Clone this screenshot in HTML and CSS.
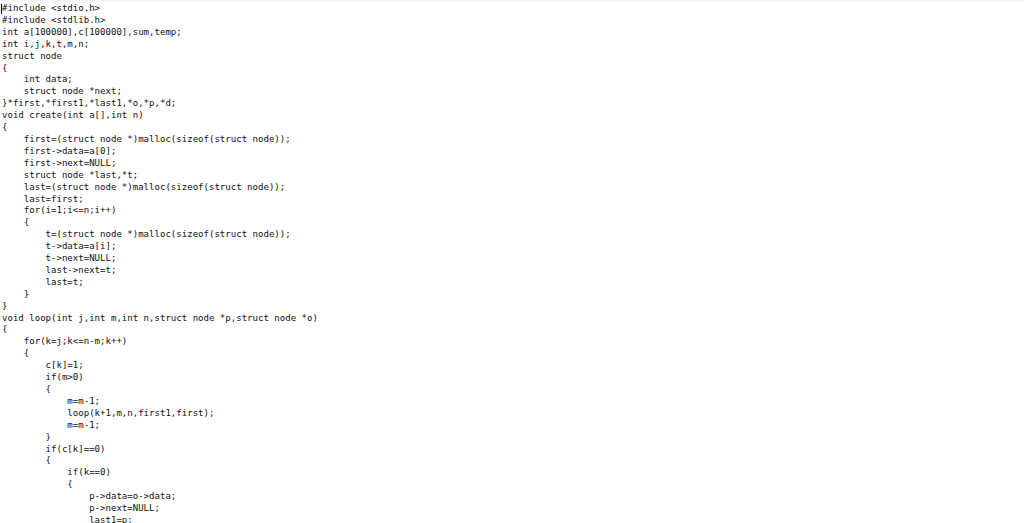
FILE: index.html
```html
<!DOCTYPE html>
<html lang="en">
<head>
    <meta charset="UTF-8">
    <title>main.c</title>
    <link rel="stylesheet" href="styles.css">
</head>
<body>
    <div class="top-strip"></div>
    <div class="editor">
<pre class="code"><span class="caret"></span>#include &lt;stdio.h&gt;
#include &lt;stdlib.h&gt;
int a[100000],c[100000],sum,temp;
int i,j,k,t,m,n;
struct node
{
    int data;
    struct node *next;
}*first,*first1,*last1,*o,*p,*d;
void create(int a[],int n)
{
    first=(struct node *)malloc(sizeof(struct node));
    first-&gt;data=a[0];
    first-&gt;next=NULL;
    struct node *last,*t;
    last=(struct node *)malloc(sizeof(struct node));
    last=first;
    for(i=1;i&lt;=n;i++)
    {
        t=(struct node *)malloc(sizeof(struct node));
        t-&gt;data=a[i];
        t-&gt;next=NULL;
        last-&gt;next=t;
        last=t;
    }
}
void loop(int j,int m,int n,struct node *p,struct node *o)
{
    for(k=j;k&lt;=n-m;k++)
    {
        c[k]=1;
        if(m&gt;0)
        {
            m=m-1;
            loop(k+1,m,n,first1,first);
            m=m-1;
        }
        if(c[k]==0)
        {
            if(k==0)
            {
                p-&gt;data=o-&gt;data;
                p-&gt;next=NULL;
                last1=p;
</pre>
    </div>
</body>
</html>
```

FILE: styles.css
```css
* {
    margin: 0;
    padding: 0;
    box-sizing: border-box;
}

body {
    background: #ffffff;
    height: 523px;
    overflow: hidden;
}

.top-strip {
    height: 1px;
    background: #f2f2f2;
}

.editor {
    padding: 2px 0 0 2px;
}

.code {
    font-family: 'DejaVu Sans Mono', 'Liberation Mono', monospace;
    font-size: 9.05px;
    line-height: 11.9px;
    color: #111111;
    white-space: pre;
    position: relative;
}

.caret {
    position: absolute;
    left: -1px;
    top: 1px;
    width: 1px;
    height: 10px;
    background: #000000;
}
```
